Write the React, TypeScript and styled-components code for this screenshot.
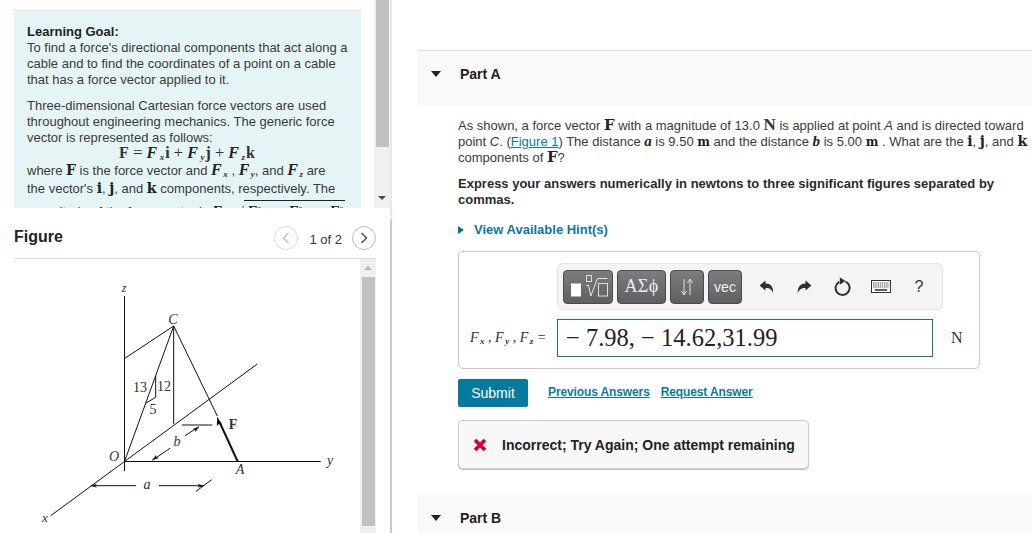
import React from "react";
import styled, { createGlobalStyle } from "styled-components";

const Global = createGlobalStyle`
  html, body { margin: 0; padding: 0; background: #fff; overflow: hidden; }
  body { font-family: "Liberation Sans", Arial, sans-serif; font-size: 13px; color: #333; }
`;
const Page = styled.div`display: flex; width: 1032px; height: 533px; overflow: hidden;`;
const LeftColumn = styled.aside`
  width: 390px; flex: none; display: flex; flex-direction: column;
  border-right: 2px solid; border-image: linear-gradient(to bottom, #e8e8e8 220px, #bccde2 220px) 1;
`;
const GoalPanel = styled.div`height: 208px; display: flex; padding-left: 14px; flex: none;`;
const GoalBox = styled.div`
  width: 347px; flex: none; margin-top: 10px; box-sizing: border-box; padding: 13px 13px 0;
  background: #e5f5f6; border-top: 1px solid #dde3e6; overflow: hidden; line-height: 16px; color: #3a3a3a;
`;
const GoalPara = styled.p`margin: 0 0 10px;`;
const Strong = styled.span`color: #222; font-weight: 700;`;
const Formula = styled.div`text-align: center; height: 16px; line-height: 16px; white-space: nowrap; letter-spacing: 1px;`;
const Op = styled.span`font-family: "Liberation Serif", serif; font-size: 17px; line-height: 0; color: #333; margin: 0 3px;`;
const MathLine = styled.div<{ $t?: number }>`line-height: 18px; white-space: nowrap; margin-top: ${(p) => p.$t ?? 0}px;`;
const Bold = styled.b<{ $s?: number }>`font-family: "DejaVu Serif", "Liberation Serif", serif; line-height: 0; font-size: ${(p) => p.$s ?? 12}px; color: #222;`;
const PlainSerif = styled.span<{ $s?: number }>`font-family: "Liberation Serif", serif; font-size: ${(p) => p.$s ?? 16}px; line-height: 0; font-weight: 700; color: #333;`;
const Var = styled.i<{ $s?: number }>`font-family: "Liberation Serif", serif; font-weight: 700; line-height: 0; font-size: ${(p) => p.$s ?? 16}px; color: #222;`;
const Sub = styled.sub`font-size: 9px; line-height: 0; vertical-align: -2px; font-family: "Liberation Serif", serif; font-style: italic; font-weight: 700; color: #333; margin-left: 1.5px;`;
const Sqrt = styled.span`display: inline-block; min-width: 95px; box-sizing: border-box; border-top: 1px solid #222; padding: 3px 1px 0 3px; line-height: 15px; word-spacing: 6px;`;
const Scrollbar = styled.div<{ $w: number }>`
  width: ${(p) => p.$w}px; flex: none; background: #f0f0f0; display: flex; flex-direction: column; align-items: center; box-sizing: border-box;
`;
const Thumb = styled.div<{ $h: number }>`width: 13px; height: ${(p) => p.$h}px; background: #c1c1c1; flex: none;`;
const Spacer = styled.div`flex: 1;`;
const ArrowDown = styled.div`width: 0; height: 0; border-left: 4px solid transparent; border-right: 4px solid transparent; border-top: 4px solid #4a4a4a; margin-bottom: 8px;`;
const ArrowUp = styled.div`width: 0; height: 0; border-left: 4px solid transparent; border-right: 4px solid transparent; border-bottom: 4px solid #b5b5b5; margin: 7px 0;`;
const Gutter = styled.div`width: 13px; flex: none;`;
const FigureHeader = styled.div`
  height: 51px; flex: none; margin: 0 14px; display: flex; align-items: flex-start; box-sizing: border-box;
  border-bottom: 1px solid #ddd; padding-top: 20px; width: 362px;
`;
const FigureTitle = styled.div`font-size: 16px; line-height: 18px; font-weight: 700; color: #222; flex: 1;`;
const Pager = styled.div`display: flex; align-items: center; margin-top: -2px;`;
const PageBtn = styled.div<{ $off?: boolean }>`
  width: 24px; height: 24px; box-sizing: border-box; border-radius: 50%; background: #fff; display: flex; align-items: center; justify-content: center;
  border: 1px solid ${(p) => (p.$off ? "#dcdcdc" : "#bdbdbd")};
`;
const PageText = styled.div`font-size: 13px; color: #333; margin: 3px 10px 0 11px;`;
const FigurePanel = styled.div`height: 274px; display: flex; flex: none;`;
const Drawing = styled.svg`width: 360px; height: 274px; flex: none; display: block;`;
const RightColumn = styled.main`flex: 1; min-width: 0; padding: 50px 0 0 26px;`;
const PartHeader = styled.div<{ $h: number; $top?: boolean }>`
  height: ${(p) => p.$h}px; box-sizing: border-box; background: #f9f9f9; display: flex; gap: 19px; align-items: flex-start; padding: 15px 0 0 13px;
  border-top: ${(p) => (p.$top ? "1px solid #dedede" : "0")};
`;
const Caret = styled.div`width: 0; height: 0; border-left: 5px solid transparent; border-right: 5px solid transparent; border-top: 6px solid #222; margin-top: 5px;`;
const PartTitle = styled.div`font-size: 14px; line-height: 16px; font-weight: 700; color: #222;`;
const Body = styled.div`padding: 12px 0 0 40px; height: 389px; box-sizing: border-box;`;
const Text = styled.p`margin: 0 0 10px; line-height: 16px; white-space: nowrap; color: #3a3a3a;`;
const Instruct = styled(Text)`font-weight: 700; color: #2a2a2a; margin-bottom: 14px;`;
const Link = styled.a`color: #0a7a9c; text-decoration: underline;`;
const Hint = styled.div`display: flex; align-items: center; gap: 10px; font-size: 13px; line-height: 16px; font-weight: 700; color: #0a7a9c; margin-bottom: 13px;`;
const HintCaret = styled.div`width: 0; height: 0; border-top: 4px solid transparent; border-bottom: 4px solid transparent; border-left: 6px solid #0a6f8e;`;
const AnswerBox = styled.div`width: 522px; height: 118px; box-sizing: border-box; border: 1px solid #c8c8c8; border-radius: 5px; padding: 11px 0 0 11px;`;
const Toolbar = styled.div`
  width: 386px; height: 47px; box-sizing: border-box; margin-left: 87px; background: #f4f4f4; border: 1px solid #e4e4e4; border-radius: 6px;
  display: flex; align-items: center; padding-left: 5px;
`;
const ToolButton = styled.div<{ $w: number; $gap?: number }>`
  width: ${(p) => p.$w}px; height: 34px; box-sizing: border-box; flex: none; margin-right: ${(p) => p.$gap ?? 4}px;
  background: linear-gradient(to bottom, #7d7d7f, #5f5f61); border: 1px solid #4a4a4a; border-radius: 4px; color: #fff;
  display: flex; align-items: center; justify-content: center; white-space: nowrap; overflow: hidden;
`;
const SymbolLabel = styled.span`font-family: "Liberation Serif", serif; font-size: 18px; letter-spacing: 0.3px; color: #eee;`;
const VecLabel = styled.span`font-size: 14px; color: #f2f2f2;`;
const ToolIcon = styled.div<{ $w: number }>`width: ${(p) => p.$w}px; display: flex; justify-content: center; flex: none; color: #333; font-size: 16px;`;
const InputRow = styled.div`display: flex; align-items: center; margin-top: 9px;`;
const InputLabel = styled.div`width: 87px; flex: none; box-sizing: border-box; font-family: "Liberation Serif", serif; font-style: italic; font-size: 14px; color: #333; white-space: nowrap;`;
const AnswerInput = styled.div`
  width: 376px; height: 38px; box-sizing: border-box; border: 1px solid #0a7a9c; display: flex; align-items: center; padding-left: 8px;
  font-family: "Liberation Serif", serif; font-size: 24.5px; color: #222; white-space: pre; flex: none;
`;
const Unit = styled.div`font-family: "Liberation Serif", serif; font-size: 16px; color: #333; margin-left: 18px;`;
const Actions = styled.div`display: flex; align-items: flex-start; margin-top: 10px;`;
const Submit = styled.div`width: 70px; height: 28px; background: #047a9c; border-radius: 2px; color: #fff; font-size: 14px; display: flex; align-items: center; justify-content: center; margin-right: 20px;`;
const ActionLink = styled.a`font-size: 12px; font-weight: 700; letter-spacing: -0.12px; color: #0a7a9c; text-decoration: underline; line-height: 14px; margin: 6px 11px 0 0;`;
const Feedback = styled.div`
  width: 351px; height: 49px; box-sizing: border-box; margin-top: 13px; background: #f8f8f8; border: 1px solid #ccc; border-radius: 5px;
  box-shadow: 0 1px 1px #bbb; display: flex; align-items: center; gap: 15px; padding-left: 14px; font-size: 14px; font-weight: 700; color: #222; white-space: nowrap;
`;

const T = styled.text<{ $b?: boolean; $i?: boolean; $s?: number }>`
  font-family: "Liberation Serif", serif; font-size: ${(p) => p.$s ?? 12}px; fill: #333; text-anchor: middle;
  font-style: ${(p) => (p.$i ? "italic" : "normal")}; font-weight: ${(p) => (p.$b ? 700 : 400)};
`;

const Figure = () => (
  <Drawing viewBox="0 0 360 274">
    <g stroke="#111" strokeWidth="1" fill="none">
      <path d="M124.5 37V212M124.5 99.5L173.7 67M124.5 202.5L173.7 67M173.7 67V165M173.7 67L217.3 157" />
      <path d="M50.7 256.7L257.3 105M124.5 202.5H320.7" />
      <path d="M155.7 117V138.3L145.7 144.3" />
      <path d="M182 166H212.3M185 176.7L199 167.7M170 189.3L152.3 201.3" />
      <path d="M90.7 226.7H136M159 226.7H204M196 232.3L211.7 220.7" />
      <path d="M219.5 163L237.7 202.5" strokeWidth="2" />
    </g>
    <g fill="#111">
      <path d="M217.3 157.5L222 166L218.8 165L216.8 167Z" />
      <path d="M90.7 226.7L97 224.7L95 226.7L97 228.7Z" />
      <path d="M204 226.7L197.5 224.7L199.5 226.7L197.5 228.7Z" />
      <path d="M199 167.7L195.5 173L195 170.7L192.5 170Z" />
      <path d="M152.3 201.3L156 196L156.5 198.3L159 199Z" />
    </g>
    <T $i x="124" y="33" $s={12}>z</T>
    <T $i x="173" y="65" $s={14}>C</T>
    <T x="140" y="133" $s={14}>13</T>
    <T x="164" y="132" $s={14}>12</T>
    <T x="153" y="155" $s={14}>5</T>
    <T $b x="233" y="170" $s={14}>F</T>
    <T $i x="177" y="187" $s={14}>b</T>
    <T $i x="114" y="202" $s={14}>O</T>
    <T $i x="330" y="206" $s={14}>y</T>
    <T $i x="240" y="215" $s={14}>A</T>
    <T $i x="147" y="230" $s={14}>a</T>
    <T $i x="45" y="263" $s={13}>x</T>
  </Drawing>
);

const UndoIcon = ({ flip }: { flip?: boolean }) => (
  <svg width="15" height="14" viewBox="0 0 15 14" style={flip ? { transform: "scaleX(-1)" } : undefined}>
    <path d="M0.5 5.5L6.5 0.5V3.6C11 3.6 14.5 6.2 14.2 13.5C13.3 10 11 8 6.5 8V10.5Z" fill="#2f2f2f" />
  </svg>
);
const ResetIcon = () => (
  <svg width="18" height="19" viewBox="0 0 18 19" fill="none">
    <path d="M11.5 4.6A7 7 0 1 1 5.3 4.8" stroke="#2f2f2f" strokeWidth="2" />
    <path d="M5.8 0.3V7.8L11.5 4Z" fill="#2f2f2f" />
  </svg>
);
const KeyboardIcon = () => (
  <svg width="20" height="13" viewBox="0 0 20 13">
    <rect x="0.5" y="0.5" width="19" height="12" fill="#fff" stroke="#333" />
    <path d="M2 3H18M2 5H18M2 7H18" stroke="#555" strokeWidth="1" strokeDasharray="1.5 0.7" />
    <path d="M4 10H16" stroke="#333" strokeWidth="1.6" />
  </svg>
);
const MathIcon = () => (
  <svg width="48" height="32" viewBox="1 1 48 32" fill="none">
    <rect x="8" y="13.5" width="10" height="13" fill="#fff" />
    <rect x="23.5" y="5.5" width="5" height="6" stroke="#ddd" strokeWidth="1" />
    <path d="M23 16L25.5 15L27.8 26L34.5 8.5H44.5" stroke="#e5e5e5" strokeWidth="1" />
    <rect x="35.5" y="13.5" width="9" height="12.5" stroke="#ddd" strokeWidth="1" />
  </svg>
);
const ArrowsIcon = () => (
  <svg width="14" height="18" viewBox="0 0 14 18" fill="none" stroke="#e2e2e2" strokeWidth="1">
    <path d="M4 1V16.5M1.5 13L4 17L6.5 13" />
    <path d="M10 17V1.5M7.5 5L10 1L12.5 5" />
  </svg>
);
const CrossIcon = () => (
  <svg width="14" height="14" viewBox="0 0 14 14"><path d="M2 2L12 12M12 2L2 12" stroke="#d4002a" strokeWidth="3.6" /></svg>
);
const Chevron = ({ left, color }: { left?: boolean; color: string }) => (
  <svg width="10" height="12" viewBox="0 0 10 12" fill="none">
    <path d={left ? "M7.5 1L2.5 6L7.5 11" : "M2.5 1L7.5 6L2.5 11"} stroke={color} strokeWidth="1.6" />
  </svg>
);

export default function App() {
  return (
    <Page>
      <Global />
      <LeftColumn>
        <GoalPanel>
          <GoalBox>
            <GoalPara>
              <Strong>Learning Goal:</Strong>
              <br />To find a force's directional components that act along a
              <br />cable and to find the coordinates of a point on a cable
              <br />that has a force vector applied to it.
            </GoalPara>
            <div>
              Three-dimensional Cartesian force vectors are used
              <br />throughout engineering mechanics. The generic force
              <br />vector is represented as follows:
            </div>
            <Formula>
              <PlainSerif>F</PlainSerif><Op>=</Op><Var>F<Sub>x</Sub></Var><PlainSerif>i</PlainSerif><Op>+</Op><Var>F<Sub>y</Sub></Var><PlainSerif>j</PlainSerif><Op>+</Op><Var>F<Sub>z</Sub></Var><PlainSerif>k</PlainSerif>
            </Formula>
            <MathLine>
              where <Bold $s={14}>F</Bold> is the force vector and <Var $s={16}>F<Sub>x</Sub></Var> , <Var $s={16}>F<Sub>y</Sub></Var>, and <Var $s={16}>F<Sub>z</Sub></Var> are
            </MathLine>
            <MathLine>
              the vector's <Bold $s={14}>i</Bold>, <Bold $s={14}>j</Bold>, and <Bold $s={14}>k</Bold> components, respectively. The
            </MathLine>
            <MathLine $t={2}>
              magnitude of the force vector is <Var $s={15}>F</Var> = √<Sqrt><Var $s={15}>F</Var>² + <Var $s={15}>F</Var>² + <Var $s={15}>F</Var>²</Sqrt>
            </MathLine>
          </GoalBox>
          <Gutter />
          <Scrollbar $w={16}>
            <Thumb $h={147} />
            <Spacer />
            <ArrowDown />
          </Scrollbar>
        </GoalPanel>
        <FigureHeader>
          <FigureTitle>Figure</FigureTitle>
          <Pager>
            <PageBtn $off><Chevron left color="#c4c4c4" /></PageBtn>
            <PageText>1 of 2</PageText>
            <PageBtn><Chevron color="#555" /></PageBtn>
          </Pager>
        </FigureHeader>
        <FigurePanel>
          <Figure />
          <Scrollbar $w={16}>
            <ArrowUp />
            <Thumb $h={249} />
          </Scrollbar>
        </FigurePanel>
      </LeftColumn>
      <RightColumn>
        <PartHeader $h={56} $top>
          <Caret />
          <PartTitle>Part A</PartTitle>
        </PartHeader>
        <Body>
          <Text>
            As shown, a force vector <Bold $s={15}>F</Bold> with a magnitude of 13.0 <PlainSerif $s={17}>N</PlainSerif> is applied at point <i>A</i> and is directed toward
            <br />point <i>C</i>. (<Link>Figure 1</Link>) The distance <Var $s={15}>a</Var> is 9.50 <Bold $s={12}>m</Bold> and the distance <Var $s={15}>b</Var> is 5.00 <Bold $s={12}>m</Bold> . What are the <Bold $s={14}>i</Bold>, <Bold $s={14}>j</Bold>, and <Bold $s={14}>k</Bold>
            <br />components of <Bold $s={15}>F</Bold>?
          </Text>
          <Instruct>
            Express your answers numerically in newtons to three significant figures separated by
            <br />commas.
          </Instruct>
          <Hint><HintCaret />View Available Hint(s)</Hint>
          <AnswerBox>
            <Toolbar>
              <ToolButton $w={50}><MathIcon /></ToolButton>
              <ToolButton $w={49}><SymbolLabel>ΑΣϕ</SymbolLabel></ToolButton>
              <ToolButton $w={34}><ArrowsIcon /></ToolButton>
              <ToolButton $w={34} $gap={6}><VecLabel>vec</VecLabel></ToolButton>
              <ToolIcon $w={36}><UndoIcon /></ToolIcon>
              <ToolIcon $w={40}><UndoIcon flip /></ToolIcon>
              <ToolIcon $w={38}><ResetIcon /></ToolIcon>
              <ToolIcon $w={38}><KeyboardIcon /></ToolIcon>
              <ToolIcon $w={38}>?</ToolIcon>
            </Toolbar>
            <InputRow>
              <InputLabel>F<Sub>x</Sub> , F<Sub>y</Sub> , F<Sub>z</Sub> =</InputLabel>
              <AnswerInput>− 7.98, − 14.62,31.99</AnswerInput>
              <Unit>N</Unit>
            </InputRow>
          </AnswerBox>
          <Actions>
            <Submit>Submit</Submit>
            <ActionLink>Previous Answers</ActionLink>
            <ActionLink>Request Answer</ActionLink>
          </Actions>
          <Feedback><CrossIcon />Incorrect; Try Again; One attempt remaining</Feedback>
        </Body>
        <PartHeader $h={40}>
          <Caret />
          <PartTitle>Part B</PartTitle>
        </PartHeader>
      </RightColumn>
    </Page>
  );
}
